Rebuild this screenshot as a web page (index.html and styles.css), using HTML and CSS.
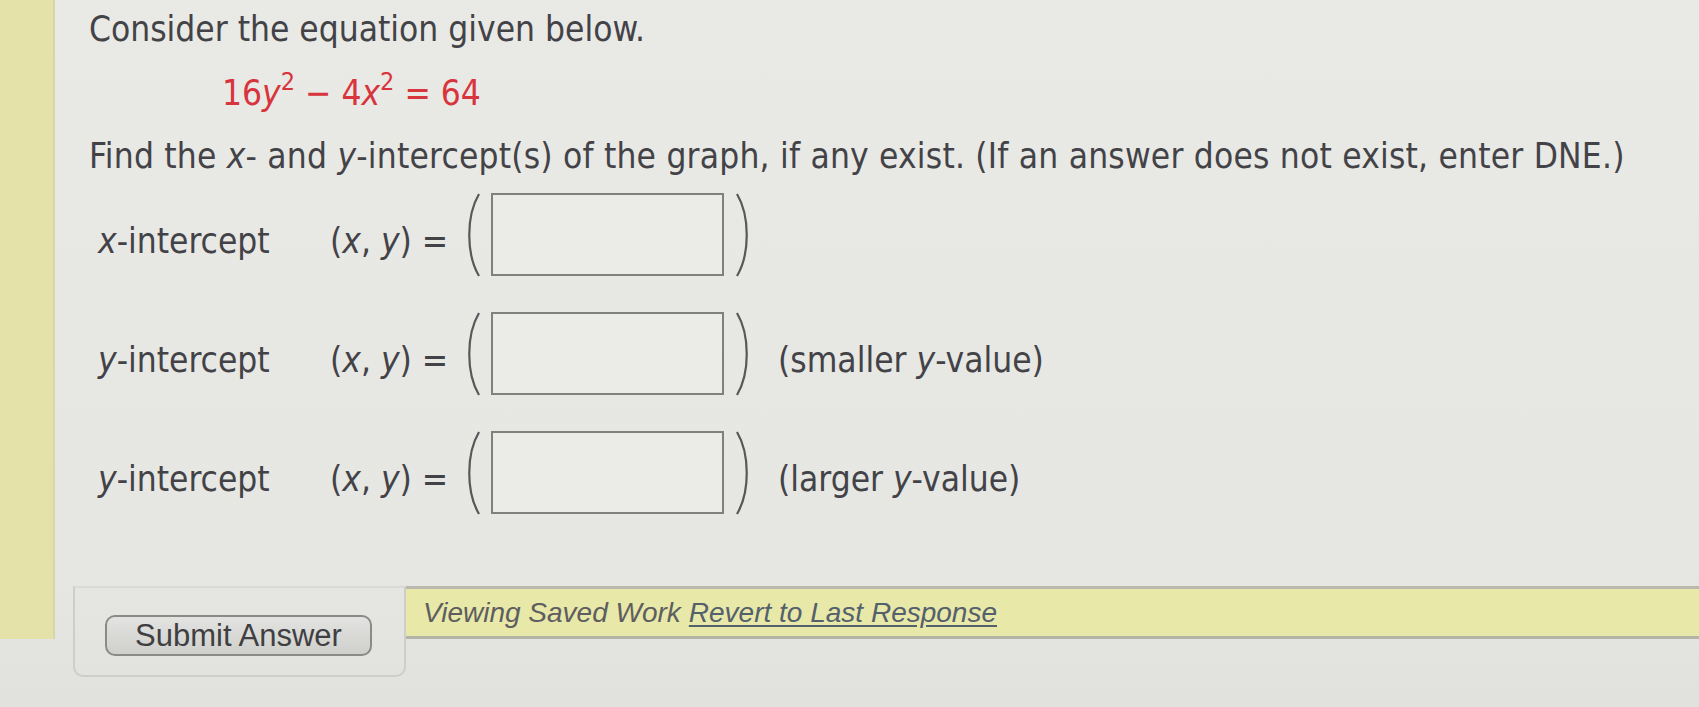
FILE: index.html
```html
<!DOCTYPE html>
<html lang="en">
<head>
<meta charset="utf-8">
<title>Intercepts</title>
<link rel="stylesheet" href="styles.css">
</head>
<body>
<div class="page">
  <div class="strip"></div>
  <div class="question">
    <p class="title">Consider the equation given below.</p>
    <p class="eq">16<i>y</i><sup>2</sup> − 4<i>x</i><sup>2</sup> = 64</p>
    <p class="find">Find the <i>x</i>- and <i>y</i>-intercept(s) of the graph, if any exist. (If an answer does not exist, enter DNE.)</p>
    <div class="rows">
      <div class="row">
        <span class="label"><i>x</i>-intercept</span>
        <span class="pair">(<i>x</i>, <i>y</i>) =</span>
        <svg class="paren" viewBox="0 0 18 86" width="18" height="86"><path d="M15 2 C2 24 2 62 15 84"/></svg>
        <span class="box"></span>
        <svg class="paren" viewBox="0 0 18 86" width="18" height="86"><path d="M3 2 C16 24 16 62 3 84"/></svg>
      </div>
      <div class="row">
        <span class="label"><i>y</i>-intercept</span>
        <span class="pair">(<i>x</i>, <i>y</i>) =</span>
        <svg class="paren" viewBox="0 0 18 86" width="18" height="86"><path d="M15 2 C2 24 2 62 15 84"/></svg>
        <span class="box"></span>
        <svg class="paren" viewBox="0 0 18 86" width="18" height="86"><path d="M3 2 C16 24 16 62 3 84"/></svg>
        <span class="note">(smaller <i>y</i>-value)</span>
      </div>
      <div class="row">
        <span class="label"><i>y</i>-intercept</span>
        <span class="pair">(<i>x</i>, <i>y</i>) =</span>
        <svg class="paren" viewBox="0 0 18 86" width="18" height="86"><path d="M15 2 C2 24 2 62 15 84"/></svg>
        <span class="box"></span>
        <svg class="paren" viewBox="0 0 18 86" width="18" height="86"><path d="M3 2 C16 24 16 62 3 84"/></svg>
        <span class="note">(larger <i>y</i>-value)</span>
      </div>
    </div>
  </div>
  <div class="footer">
    <div class="submit-panel">
      <button class="submit" type="button">Submit Answer</button>
    </div>
    <div class="saved-bar">
      <span class="saved">Viewing Saved Work</span>
      <a class="revert" href="#">Revert to Last Response</a>
    </div>
  </div>
</div>
</body>
</html>
```

FILE: styles.css
```css
html, body {
  margin: 0;
  padding: 0;
}
body {
  background: #e4e4e0;
  font-family: "DejaVu Sans Condensed", "DejaVu Sans", Verdana, sans-serif;
  font-stretch: condensed;
  color: #434347;
}
.page {
  width: 1699px;
  height: 707px;
  overflow: hidden;
  display: grid;
  grid-template-columns: 55px 1fr;
  grid-template-rows: auto 53px 38px 1fr;
  background: linear-gradient(#e9e9e6, #e6e6e3 80%, #e1e1dd);
}
.strip {
  grid-column: 1;
  grid-row: 1 / 3;
  background: #e4e2a8;
  border-right: 2px solid #d7d6aa;
}
.question {
  grid-column: 2;
  grid-row: 1;
  padding: 8px 0 72px 34px;
  font-size: 35px;
  line-height: 42px;
}
.question p {
  margin: 0;
  white-space: nowrap;
}
.eq {
  margin-top: 22px !important;
  margin-left: 133px !important;
  color: #d8343c;
}
.eq sup {
  font-size: 25px;
  line-height: 0;
  vertical-align: 15px;
}
.find {
  margin-top: 21px !important;
  letter-spacing: 0.2px;
}
.rows {
  margin-top: 16px;
  display: flex;
  flex-direction: column;
  gap: 36px;
}
.row {
  height: 83px;
  display: flex;
  align-items: center;
}
.label, .pair, .note {
  padding-top: 12px;
  white-space: nowrap;
}
.label {
  margin-left: 9px;
  width: 232px;
}
.pair {
  width: 126px;
}
.paren {
  fill: none;
  stroke: #58585a;
  stroke-width: 2.2;
}
.paren:first-of-type {
  margin-left: 8px;
  margin-right: 9px;
}
.box {
  width: 233px;
  height: 83px;
  box-sizing: border-box;
  border: 2px solid #80807d;
  background: #ebebe8;
}
.box + .paren {
  margin-left: 10px;
}
.note {
  margin-left: 26px;
}
.footer {
  grid-column: 2;
  grid-row: 2 / 4;
  display: flex;
  align-items: flex-start;
}
.submit-panel {
  margin-left: 18px;
  width: 333px;
  height: 91px;
  box-sizing: border-box;
  border: 2px solid #cdcdca;
  border-top-color: #d9d9d6;
  border-radius: 0 0 10px 10px;
  padding: 27px 0 0 30px;
}
.submit {
  width: 267px;
  height: 41px;
  box-sizing: border-box;
  border: 2px solid #8a8a88;
  border-radius: 10px;
  background: linear-gradient(#e3e3e1, #cfcfcc);
  font-family: "Liberation Sans", Arial, sans-serif;
  font-size: 31px;
  color: #3f3f42;
  padding: 0;
}
.saved-bar {
  flex: 1;
  height: 53px;
  box-sizing: border-box;
  background: #e8e8a8;
  border-top: 3px solid #b9b9ae;
  border-bottom: 3px solid #b3b3a8;
  padding-left: 17px;
  display: flex;
  align-items: center;
  gap: 8px;
  font-family: "Liberation Sans", Arial, sans-serif;
  font-style: italic;
  font-size: 28px;
}
.saved {
  color: #5e5e60;
}
.revert {
  color: #54606c;
  text-decoration: underline;
  text-underline-offset: 3px;
}
```
